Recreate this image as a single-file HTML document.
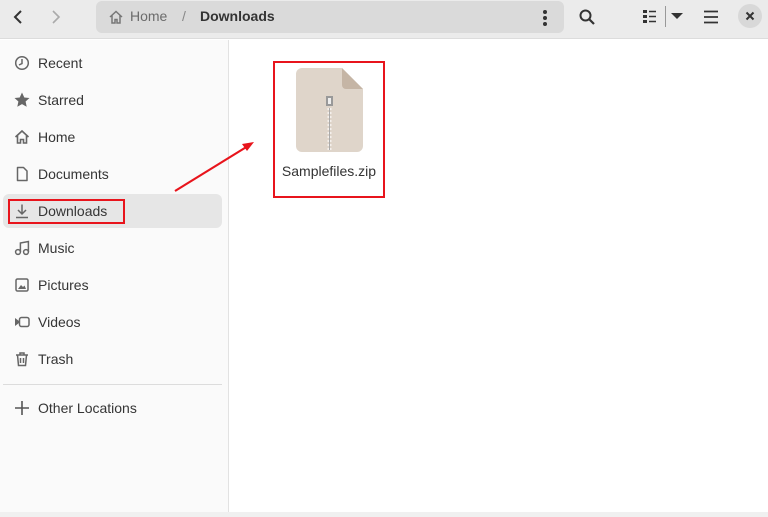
<!DOCTYPE html>
<html><head><style>
*{margin:0;padding:0;box-sizing:border-box}
body{width:768px;height:517px;overflow:hidden;background:#fff;font-family:"Liberation Sans",sans-serif;color:#353535;position:relative}
.hdr{position:absolute;left:0;top:0;width:768px;height:39px;background:#ebebeb;border-bottom:1px solid #dcdcdc}
.path{position:absolute;left:96px;top:1px;width:468px;height:32px;background:#dadada;border-radius:6px}
.side{position:absolute;left:0;top:40px;width:229px;height:472px;background:#fafafa;border-right:1px solid #e2e2e2}
.item{position:absolute;left:0;width:229px;height:20px;font-size:14px;line-height:20px}
.item span{position:absolute;left:38px;top:0}
.item svg{position:absolute;left:14px;top:2px}
.bot{position:absolute;left:0;top:512px;width:768px;height:5px;background:#f0f0f0}
</style></head><body>
<div class="hdr">
<svg style="position:absolute;left:10px;top:8px" width="16" height="18"><path d="M11 3L5 9l6 6" stroke="#333" stroke-width="2" fill="none"/></svg>
<svg style="position:absolute;left:48px;top:8px" width="16" height="18"><path d="M5 3l6 6-6 6" stroke="#aaa" stroke-width="1.6" fill="none"/></svg>
<div class="path">
<svg style="position:absolute;left:12px;top:8px" width="16" height="16"><path d="M2 8L8 2.5 14 8M4 6.5V14h3v-3.5h2V14h3V6.5" stroke="#777" stroke-width="1.5" fill="none"/></svg>
<span style="position:absolute;left:34px;top:7px;font-size:14px;color:#6b6b6b">Home</span>
<span style="position:absolute;left:86px;top:7px;font-size:14px;color:#888">/</span>
<span style="position:absolute;left:104px;top:7px;font-size:14px;font-weight:bold;color:#333">Downloads</span>
<svg style="position:absolute;left:446px;top:8px" width="6" height="18"><circle cx="3" cy="3" r="2" fill="#333"/><circle cx="3" cy="9" r="2" fill="#333"/><circle cx="3" cy="15" r="2" fill="#333"/></svg>
</div>
<svg style="position:absolute;left:578px;top:8px" width="18" height="18"><circle cx="7.5" cy="7.5" r="5" stroke="#333" stroke-width="2" fill="none"/><path d="M11 11l5 5" stroke="#333" stroke-width="2.2"/></svg>
<svg style="position:absolute;left:642px;top:9px" width="16" height="16"><rect x="1" y="1" width="4" height="3" fill="#333"/><rect x="1" y="6" width="4" height="3" fill="#333"/><rect x="1" y="11" width="4" height="3" fill="#333"/><path d="M7 2.5h7M7 7.5h7M7 12.5h7" stroke="#333" stroke-width="1.5"/></svg>
<div style="position:absolute;left:665px;top:6px;width:1px;height:21px;background:#999"></div>
<svg style="position:absolute;left:670px;top:12px" width="14" height="8"><path d="M1 1h12L7 7z" fill="#333"/></svg>
<svg style="position:absolute;left:703px;top:9px" width="16" height="16"><path d="M1 2.5h14M1 8h14M1 13.5h14" stroke="#333" stroke-width="1.7"/></svg>
<div style="position:absolute;left:738px;top:4px;width:24px;height:24px;border-radius:12px;background:#d8d8d8"></div>
<svg style="position:absolute;left:745px;top:11px" width="10" height="10"><path d="M1.5 1.5l7 7M8.5 1.5l-7 7" stroke="#333" stroke-width="2"/></svg>
</div>
<div class="side">
<div style="position:absolute;left:3px;top:154px;width:219px;height:34px;background:#e6e6e6;border-radius:6px"></div>
<div style="position:absolute;left:8px;top:159px;width:117px;height:25px;border:2px solid #e8141c"></div>
<div class="item" style="top:13px"><svg width="16" height="16"><circle cx="8" cy="8" r="6.3" stroke="#666" stroke-width="1.5" fill="none"/><path d="M8 4v4.5l-3 1.5" stroke="#666" stroke-width="1.5" fill="none"/></svg><span>Recent</span></div>
<div class="item" style="top:50px"><svg width="16" height="16"><path d="M8 .5l2.3 5 5.2.5-3.9 3.5 1.1 5.2L8 12.1 3.3 14.7l1.1-5.2L.5 6l5.2-.5z" fill="#666"/></svg><span>Starred</span></div>
<div class="item" style="top:87px"><svg width="16" height="16"><path d="M1.5 8L8 2l6.5 6M3.5 6.5V14h3v-3.5h3V14h3V6.5" stroke="#666" stroke-width="1.6" fill="none"/></svg><span>Home</span></div>
<div class="item" style="top:124px"><svg width="16" height="16"><path d="M3.5 1.5h6l3.5 3.5v9.5h-9.5z" stroke="#666" stroke-width="1.5" fill="none" stroke-linejoin="round"/></svg><span>Documents</span></div>
<div class="item" style="top:161px"><svg width="16" height="16"><path d="M8 1.5v9M4 7l4 4 4-4M2 14.5h12" stroke="#666" stroke-width="1.5" fill="none"/></svg><span>Downloads</span></div>
<div class="item" style="top:198px"><svg width="16" height="16"><circle cx="4" cy="12" r="2.4" stroke="#666" stroke-width="1.5" fill="none"/><circle cx="12" cy="12" r="2.4" stroke="#666" stroke-width="1.5" fill="none"/><path d="M6.4 12V3l8-1.5v10.5" stroke="#666" stroke-width="1.5" fill="none"/></svg><span>Music</span></div>
<div class="item" style="top:235px"><svg width="16" height="16"><rect x="2" y="2" width="12" height="12" rx="1.5" stroke="#666" stroke-width="1.5" fill="none"/><path d="M4 12l3-4 2 2 1.5-1.5L12 12z" fill="#666"/></svg><span>Pictures</span></div>
<div class="item" style="top:272px"><svg width="16" height="16"><path d="M1 4v8l4-3V7z" fill="#666"/><rect x="5.5" y="3.5" width="9.5" height="9" rx="2" stroke="#666" stroke-width="1.5" fill="none"/></svg><span>Videos</span></div>
<div class="item" style="top:309px"><svg width="16" height="16"><path d="M2 4h12M6 4V2h4v2M3.5 4l1 10.5h7l1-10.5M6.5 7v5M9.5 7v5" stroke="#666" stroke-width="1.5" fill="none"/></svg><span>Trash</span></div>
<div style="position:absolute;left:3px;top:344px;width:219px;height:1px;background:#dcdcdc"></div>
<div class="item" style="top:358px"><svg width="16" height="16"><path d="M8 1v14M1 8h14" stroke="#555" stroke-width="1.6"/></svg><span>Other Locations</span></div>
</div>
<div style="position:absolute;left:273px;top:61px;width:112px;height:137px;border:2px solid #e8141c"></div>
<svg style="position:absolute;left:296px;top:68px" width="67" height="84">
<path d="M6 0h40l21 21v57a6 6 0 0 1-6 6H6a6 6 0 0 1-6-6V6a6 6 0 0 1 6-6z" fill="#dfd5ca"/>
<path d="M46 0l21 21H50a4 4 0 0 1-4-4z" fill="#c5b5a5"/>
<rect x="30" y="28" width="7" height="10" fill="#999"/><rect x="32" y="30" width="3" height="6" fill="#eee"/>
<path d="M33.5 40v42" stroke="#f4f0ec" stroke-width="4" stroke-dasharray="2 2"/>
<path d="M33.5 40v42" stroke="#aaa" stroke-width="1"/>
</svg>
<div style="position:absolute;left:273px;top:163px;width:112px;text-align:center;font-size:14px;color:#333">Samplefiles.zip</div>
<svg style="position:absolute;left:170px;top:135px" width="90" height="62"><path d="M5 56L78 11" stroke="#e8141c" stroke-width="2.2"/><path d="M84 7l-12 2 5 7z" fill="#e8141c"/></svg>
<div class="bot"></div>
</body></html>
